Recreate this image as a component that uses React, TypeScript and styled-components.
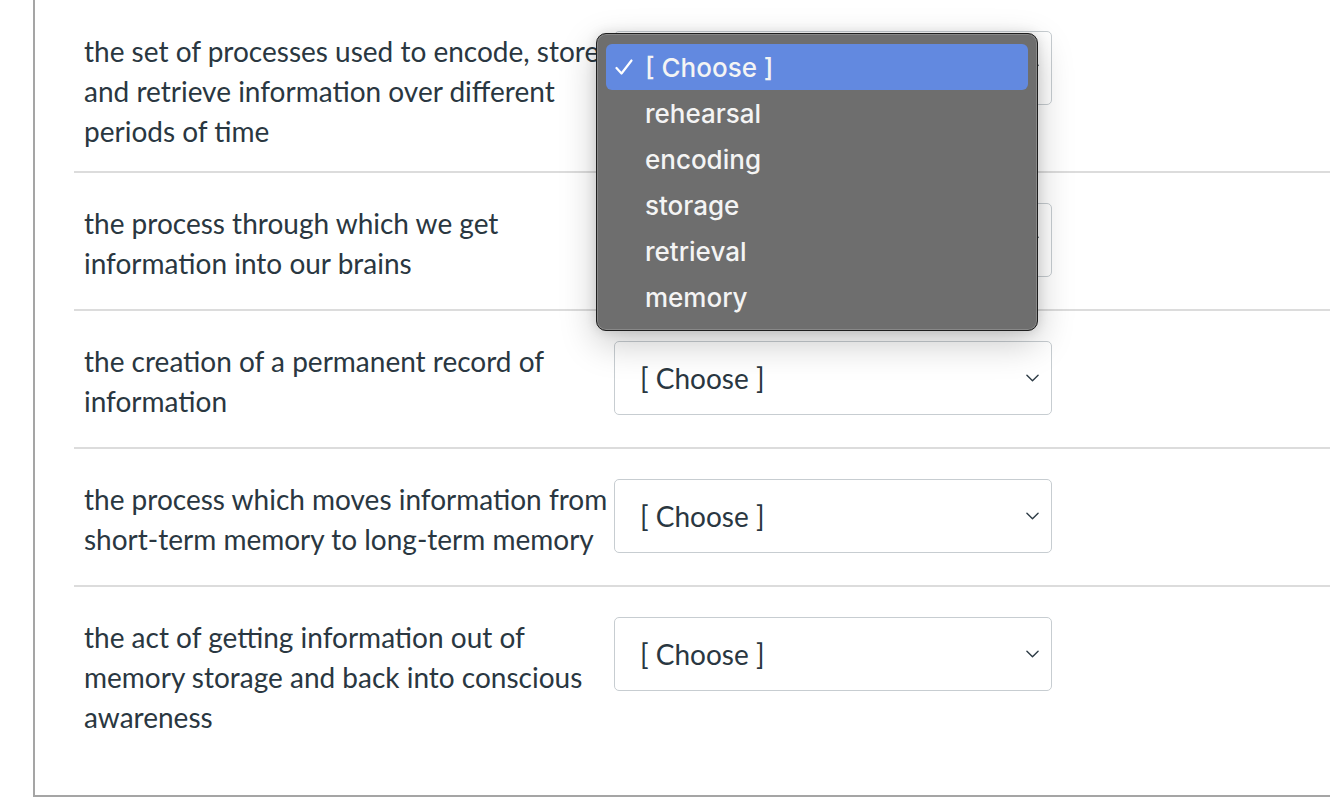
import styled, { createGlobalStyle } from "styled-components";

const GlobalStyle = createGlobalStyle`
  html, body {
    margin: 0;
    padding: 0;
    background: #ffffff;
  }
  body {
    font-family: Lato, "Noto Sans", sans-serif;
    color: #2d3b45;
  }
`;

const OPTIONS = ["rehearsal", "encoding", "storage", "retrieval", "memory"];

const QUESTIONS = [
  "the set of processes used to encode, store and retrieve information over different periods of time",
  "the process through which we get information into our brains",
  "the creation of a permanent record of information",
  "the process which moves information from short-term memory to long-term memory",
  "the act of getting information out of memory storage and back into conscious awareness",
];

function Chevron() {
  return (
    <ChevronIcon viewBox="0 0 14 8" fill="none">
      <path d="M1 1l6 6 6-6" stroke="#2d3b45" strokeWidth="1.5" strokeLinecap="round" strokeLinejoin="round" />
    </ChevronIcon>
  );
}

function CheckMark() {
  return (
    <CheckIcon viewBox="0 0 18 16" fill="none">
      <path d="M1.5 9l5 5.5L16.5 1.5" stroke="#ffffff" strokeWidth="2.2" strokeLinecap="round" strokeLinejoin="round" />
    </CheckIcon>
  );
}

function PopupMenu() {
  return (
    <Menu>
      <MenuItem $active>
        <CheckSlot>
          <CheckMark />
        </CheckSlot>
        [ Choose ]
      </MenuItem>
      {OPTIONS.map((o) => (
        <MenuItem key={o}>
          <CheckSlot />
          {o}
        </MenuItem>
      ))}
    </Menu>
  );
}

function App() {
  return (
    <Page>
      <GlobalStyle />
      <Frame>
        {QUESTIONS.map((q, i) => (
          <Row key={i} $last={i === QUESTIONS.length - 1}>
            <Term>{q}</Term>
            <SelectWrap>
              <SelectBox>
                <span>[ Choose ]</span>
                <Chevron />
              </SelectBox>
              {i === 0 && <PopupMenu />}
            </SelectWrap>
          </Row>
        ))}
      </Frame>
    </Page>
  );
}

const Page = styled.div`
  padding-left: 33px;
  overflow: hidden;
  height: 806px;
`;

const Frame = styled.div`
  border-left: 2px solid #a5a5a5;
  border-bottom: 2px solid #a5a5a5;
  padding: 1px 0 38px;
`;

const Row = styled.div<{ $last?: boolean }>`
  display: flex;
  align-items: flex-start;
  margin-left: 39px;
  padding: 30px 0 20px;
  border-bottom: ${(p) => (p.$last ? "none" : "2px solid #dcdcdc")};
`;

const Term = styled.div`
  width: 540px;
  padding-left: 10px;
  box-sizing: border-box;
  font-size: 28px;
  line-height: 40px;
  color: #2a3741;
`;

const SelectWrap = styled.div`
  position: relative;
  margin-bottom: 12px;
`;

const SelectBox = styled.div`
  width: 438px;
  height: 74px;
  box-sizing: border-box;
  border: 1.5px solid #c7cdd1;
  border-radius: 5px;
  background: #ffffff;
  display: flex;
  align-items: center;
  justify-content: space-between;
  padding: 0 12px 0 25px;
  font-size: 28px;
  color: #2a3741;
`;

const ChevronIcon = styled.svg`
  width: 13px;
  height: 8px;
`;

const Menu = styled.div`
  position: absolute;
  left: -18px;
  top: 2px;
  width: 442px;
  box-sizing: border-box;
  padding: 10px 9px;
  background: #6e6e6e;
  border: 1px solid #1e1e1e;
  border-radius: 10px;
  box-shadow: inset 0 0 0 1px rgba(255, 255, 255, 0.18), 0 12px 36px rgba(0, 0, 0, 0.22),
    0 0 12px rgba(0, 0, 0, 0.12);
  font-family: Inter, "Noto Sans", sans-serif;
  z-index: 10;
`;

const MenuItem = styled.div<{ $active?: boolean }>`
  height: 46px;
  display: flex;
  align-items: center;
  border-radius: 6px;
  background: ${(p) => (p.$active ? "#6289e0" : "transparent")};
  color: #f4f4f4;
  font-size: 26px;
  font-weight: 500;
`;

const CheckSlot = styled.span`
  width: 39px;
  padding-left: 9px;
  box-sizing: border-box;
  display: flex;
  align-items: center;
`;

const CheckIcon = styled.svg`
  width: 18px;
  height: 16px;
`;

export default App;
